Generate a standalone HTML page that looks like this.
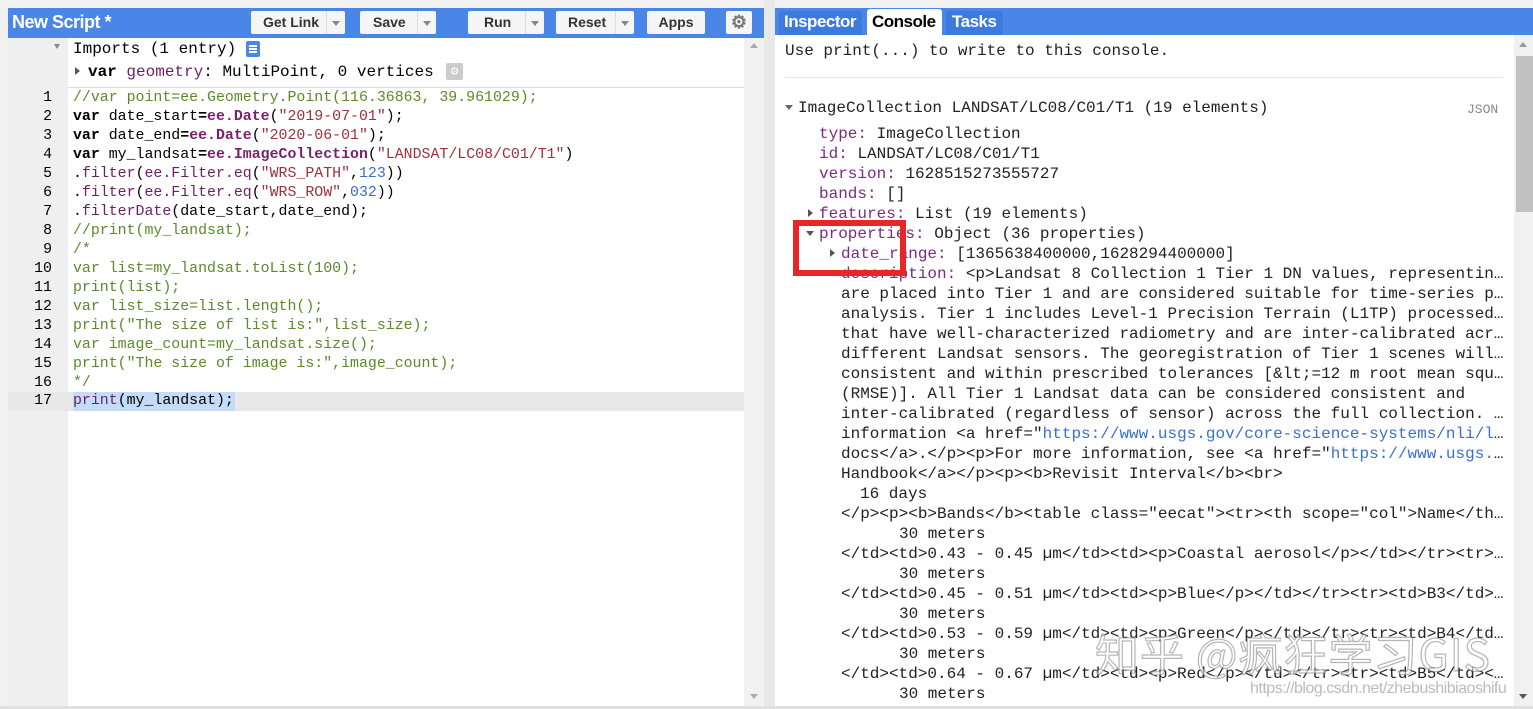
<!DOCTYPE html>
<html><head><meta charset="utf-8"><style>
*{margin:0;padding:0;box-sizing:border-box}
body{width:1533px;height:709px;background:#f1f1f1;position:relative;overflow:hidden;font-family:"Liberation Mono",monospace}
.a{position:absolute;white-space:pre}
.bar{position:absolute;background:#4a86e8}
.btn{position:absolute;top:11px;height:23px;background:#f5f5f5;border-radius:2px;font:bold 14px "Liberation Sans",sans-serif;color:#333;line-height:23px}
.btn .dd{position:absolute;right:0;top:0;width:19px;height:23px;border-left:1px solid #ddd;}
.btn .dd:after{content:"";position:absolute;left:5px;top:10px;border:4px solid transparent;border-top:5px solid #888}
.l{position:absolute;left:73px;font-size:14.9px;line-height:19px;white-space:pre;color:#000}
.n{position:absolute;left:8px;width:44px;text-align:right;font-size:14.9px;line-height:19px;color:#000}
.c{color:#5b8a2a}.k{color:#000;font-weight:bold}.s{color:#a0303a}.f{color:#7a1f6e;font-weight:bold}.m{color:#3b6fc4}.p{color:#6b1f6b}
.r{position:absolute;font-size:16px;line-height:20px;white-space:pre;overflow:hidden;text-overflow:ellipsis;color:#222}
.key{color:#7a2b82}.u{color:#3a6fd0}
.tri{position:absolute;width:0;height:0;border:4px solid transparent}
.L{position:absolute;left:0;top:1px;width:1533px;height:0}
</style></head><body>
<div class="a" style="left:8px;top:8px;width:756px;height:701px;background:#fff"></div>
<div class="bar" style="left:8px;top:8px;width:756px;height:30px"></div>
<div class="a" style="left:12px;top:12px;font:bold 18px 'Liberation Sans',sans-serif;color:#fff;letter-spacing:-0.5px">New Script *</div>
<div class="btn" style="left:251px;width:94px"><span style="padding-left:12px">Get Link</span><div class="dd"></div></div>
<div class="btn" style="left:360px;width:76px"><span style="padding-left:13px">Save</span><div class="dd"></div></div>
<div class="btn" style="left:468px;width:76px"><span style="padding-left:16px">Run</span><div class="dd"></div></div>
<div class="btn" style="left:556px;width:78px"><span style="padding-left:12px">Reset</span><div class="dd"></div></div>
<div class="btn" style="left:647px;width:58px;text-align:center">Apps</div>
<div class="btn" style="left:726px;width:26px;text-align:center;color:#777;font-size:18px">⚙</div>
<div class="a" style="left:8px;top:38px;width:60px;height:671px;background:#efefef"></div>
<div class="a" style="left:68px;top:38px;width:676px;height:50px;background:#fff;border-bottom:1px solid #ddd"></div>
<div class="tri" style="left:54px;top:44px;border-top:5px solid #888;border-width:5px 3px 0 3px"></div>
<div class="l" style="top:39px;font-size:16px;line-height:20px">Imports (1 entry)</div>
<div class="a" style="left:246px;top:41px;width:14px;height:16px;background:#4a86e8;border-radius:2px"><div style="margin:4px 3px;height:1.5px;background:#fff;box-shadow:0 3px #fff,0 6px #fff"></div></div>
<div class="tri" style="left:75px;top:67px;border-left:5px solid #555;border-width:4px 0 4px 5px"></div>
<div class="l" style="top:62px;left:88px;font-size:16px;line-height:20px"><span class="k">var</span> <span class="p">geometry</span>: MultiPoint, 0 vertices</div>
<div class="a" style="left:446px;top:63px;width:17px;height:17px;background:#ccc;border-radius:2px;color:#fff;font-size:13px;text-align:center;line-height:17px">⚙</div>
<div class="a" style="left:8px;top:392px;width:736px;height:19px;background:#e8e8e8"></div>
<div class="a" style="left:73px;top:392px;width:162px;height:19px;background:#c5dcf8"></div>
<div class="L">
<div class="n" style="top:88px">1</div><div class="l c" style="top:88px">//var point=ee.Geometry.Point(116.36863, 39.961029);</div>
<div class="n" style="top:107px">2</div><div class="l" style="top:107px"><span class="k">var</span> date_start<span class="k">=</span><span class="f">ee.Date</span>(<span class="s">"2019-07-01"</span>);</div>
<div class="n" style="top:126px">3</div><div class="l" style="top:126px"><span class="k">var</span> date_end<span class="k">=</span><span class="f">ee.Date</span>(<span class="s">"2020-06-01"</span>);</div>
<div class="n" style="top:145px">4</div><div class="l" style="top:145px"><span class="k">var</span> my_landsat<span class="k">=</span><span class="f">ee.ImageCollection</span>(<span class="s">"LANDSAT/LC08/C01/T1"</span>)</div>
<div class="n" style="top:164px">5</div><div class="l" style="top:164px">.<span class="p">filter</span>(<span class="p">ee.Filter.eq</span>(<span class="s">"WRS_PATH"</span>,<span class="m">123</span>))</div>
<div class="n" style="top:183px">6</div><div class="l" style="top:183px">.<span class="p">filter</span>(<span class="p">ee.Filter.eq</span>(<span class="s">"WRS_ROW"</span>,<span class="m">032</span>))</div>
<div class="n" style="top:202px">7</div><div class="l" style="top:202px">.<span class="p">filterDate</span>(date_start,date_end);</div>
<div class="n" style="top:221px">8</div><div class="l c" style="top:221px">//print(my_landsat);</div>
<div class="n" style="top:240px">9</div><div class="l c" style="top:240px">/*</div>
<div class="n" style="top:259px">10</div><div class="l c" style="top:259px">var list=my_landsat.toList(100);</div>
<div class="n" style="top:278px">11</div><div class="l c" style="top:278px">print(list);</div>
<div class="n" style="top:297px">12</div><div class="l c" style="top:297px">var list_size=list.length();</div>
<div class="n" style="top:316px">13</div><div class="l c" style="top:316px">print("The size of list is:",list_size);</div>
<div class="n" style="top:335px">14</div><div class="l c" style="top:335px">var image_count=my_landsat.size();</div>
<div class="n" style="top:354px">15</div><div class="l c" style="top:354px">print("The size of image is:",image_count);</div>
<div class="n" style="top:373px">16</div><div class="l c" style="top:373px">*/</div>
<div class="n" style="top:391px">17</div><div class="l" style="top:391px"><span class="p">print</span>(my_landsat);</div>
</div>
<div class="a" style="left:744px;top:38px;width:20px;height:671px;background:#f1f1f1"></div>
<div class="tri" style="left:750px;top:43px;border-bottom:5px solid #aaa;border-width:0 4px 5px 4px"></div>
<div class="tri" style="left:750px;top:694px;border-top:5px solid #aaa;border-width:5px 4px 0 4px"></div>
<div class="a" style="left:764px;top:0;width:11px;height:709px;background:#e9e9e9"></div>
<div class="a" style="left:775px;top:8px;width:758px;height:701px;background:#fff"></div>
<div class="bar" style="left:775px;top:8px;width:758px;height:27px"></div>
<div class="a" style="left:779px;top:11px;width:83px;height:24px;background:#3d7ae0;border-radius:3px 3px 0 0"></div>
<div class="a" style="left:784px;top:12px;font:bold 17px 'Liberation Sans',sans-serif;color:#fff;letter-spacing:-0.5px">Inspector</div>
<div class="a" style="left:867px;top:9px;width:75px;height:26px;background:#fff;border-radius:3px 3px 0 0"></div>
<div class="a" style="left:872px;top:12px;font:bold 17px 'Liberation Sans',sans-serif;color:#000;letter-spacing:-0.5px">Console</div>
<div class="a" style="left:946px;top:11px;width:57px;height:24px;background:#3d7ae0;border-radius:3px 3px 0 0"></div>
<div class="a" style="left:952px;top:12px;font:bold 17px 'Liberation Sans',sans-serif;color:#fff;letter-spacing:-0.5px">Tasks</div>
<div class="r" style="left:785px;top:41px">Use print(...) to write to this console.</div>
<div class="a" style="left:785px;top:77px;width:718px;height:1px;background:#e6e6e6"></div>
<div class="L">
<div class="tri" style="left:785px;top:104px;border-top:5px solid #666;border-width:5px 4px 0 4px"></div>
<div class="r" style="left:798px;top:97px">ImageCollection LANDSAT/LC08/C01/T1 (19 elements)</div>
<div class="a" style="left:1467px;top:101px;font-size:13px;color:#888">JSON</div>
<div class="r" style="left:819px;top:123px"><span class="key">type:</span> ImageCollection</div>
<div class="r" style="left:819px;top:143px"><span class="key">id:</span> LANDSAT/LC08/C01/T1</div>
<div class="r" style="left:819px;top:163px"><span class="key">version:</span> 1628515273555727</div>
<div class="r" style="left:819px;top:183px"><span class="key">bands:</span> []</div>
<div class="tri" style="left:808px;top:208px;border-left:5px solid #555;border-width:4px 0 4px 5px"></div>
<div class="r" style="left:819px;top:203px"><span class="key">features:</span> List (19 elements)</div>
<div class="tri" style="left:806px;top:230px;border-top:5px solid #555;border-width:5px 4px 0 4px"></div>
<div class="r" style="left:819px;top:223px"><span class="key">properties:</span> Object (36 properties)</div>
<div class="tri" style="left:830px;top:248px;border-left:5px solid #555;border-width:4px 0 4px 5px"></div>
<div class="r" style="left:841px;top:243px"><span class="key">date_range:</span> [1365638400000,1628294400000]</div>
<div class="r" style="left:841px;top:263px;width:664px"><span class="key">description:</span> &lt;p&gt;Landsat 8 Collection 1 Tier 1 DN values, representing scaled</div>
<div class="r" style="left:841px;top:283px;width:664px">are placed into Tier 1 and are considered suitable for time-series processing</div>
<div class="r" style="left:841px;top:303px;width:664px">analysis. Tier 1 includes Level-1 Precision Terrain (L1TP) processed data</div>
<div class="r" style="left:841px;top:323px;width:664px">that have well-characterized radiometry and are inter-calibrated across the</div>
<div class="r" style="left:841px;top:343px;width:664px">different Landsat sensors. The georegistration of Tier 1 scenes will be</div>
<div class="r" style="left:841px;top:363px;width:664px">consistent and within prescribed tolerances [&amp;lt;=12 m root mean square error</div>
<div class="r" style="left:841px;top:383px;width:664px">(RMSE)]. All Tier 1 Landsat data can be considered consistent and</div>
<div class="r" style="left:841px;top:403px;width:664px">inter-calibrated (regardless of sensor) across the full collection. See more</div>
<div class="r" style="left:841px;top:423px;width:664px">information &lt;a href="<span class="u">https://www.usgs.gov/core-science-systems/nli/landsat</span></div>
<div class="r" style="left:841px;top:443px;width:664px">docs&lt;/a&gt;.&lt;/p&gt;&lt;p&gt;For more information, see &lt;a href="<span class="u">https://www.usgs.gov/</span></div>
<div class="r" style="left:841px;top:463px;width:664px">Handbook&lt;/a&gt;&lt;/p&gt;&lt;p&gt;&lt;b&gt;Revisit Interval&lt;/b&gt;&lt;br&gt;</div>
<div class="r" style="left:860px;top:483px">16 days</div>
<div class="r" style="left:841px;top:503px;width:664px">&lt;/p&gt;&lt;p&gt;&lt;b&gt;Bands&lt;/b&gt;&lt;table class="eecat"&gt;&lt;tr&gt;&lt;th scope="col"&gt;Name&lt;/th&gt;&lt;th</div>
<div class="r" style="left:899px;top:523px">30 meters</div>
<div class="r" style="left:841px;top:543px;width:664px">&lt;/td&gt;&lt;td&gt;0.43 - 0.45 µm&lt;/td&gt;&lt;td&gt;&lt;p&gt;Coastal aerosol&lt;/p&gt;&lt;/td&gt;&lt;/tr&gt;&lt;tr&gt;&lt;td</div>
<div class="r" style="left:899px;top:563px">30 meters</div>
<div class="r" style="left:841px;top:583px;width:664px">&lt;/td&gt;&lt;td&gt;0.45 - 0.51 µm&lt;/td&gt;&lt;td&gt;&lt;p&gt;Blue&lt;/p&gt;&lt;/td&gt;&lt;/tr&gt;&lt;tr&gt;&lt;td&gt;B3&lt;/td&gt;&lt;td</div>
<div class="r" style="left:899px;top:603px">30 meters</div>
<div class="r" style="left:841px;top:623px;width:664px">&lt;/td&gt;&lt;td&gt;0.53 - 0.59 µm&lt;/td&gt;&lt;td&gt;&lt;p&gt;Green&lt;/p&gt;&lt;/td&gt;&lt;/tr&gt;&lt;tr&gt;&lt;td&gt;B4&lt;/td&gt;&lt;td</div>
<div class="r" style="left:899px;top:643px">30 meters</div>
<div class="r" style="left:841px;top:663px;width:664px">&lt;/td&gt;&lt;td&gt;0.64 - 0.67 µm&lt;/td&gt;&lt;td&gt;&lt;p&gt;Red&lt;/p&gt;&lt;/td&gt;&lt;/tr&gt;&lt;tr&gt;&lt;td&gt;B5&lt;/td&gt;&lt;td</div>
<div class="r" style="left:899px;top:683px">30 meters</div>
</div>
<div class="a" style="left:793px;top:220px;width:113px;height:56px;border:6px solid #e8262a"></div>
<div class="a" style="left:1095px;top:620px;font:44px 'Noto Sans CJK SC',sans-serif;color:rgba(255,255,255,0.6);-webkit-text-stroke:1.2px rgba(120,120,120,0.55);letter-spacing:1px">知乎 @疯狂学习GIS</div>
<div class="a" style="left:1250px;top:680px;font:16px 'Liberation Sans',sans-serif;color:rgba(180,180,180,0.9);letter-spacing:-0.5px">https://blog.csdn.net/zhebushibiaoshifu</div>
<div class="a" style="left:1514px;top:35px;width:19px;height:674px;background:#f1f1f1"></div>
<div class="a" style="left:1516px;top:56px;width:17px;height:156px;background:#c1c1c1"></div>
<div class="tri" style="left:1519px;top:42px;border-bottom:5px solid #999;border-width:0 4px 5px 4px"></div>
<div class="tri" style="left:1519px;top:694px;border-top:5px solid #555;border-width:5px 4px 0 4px"></div>
<div class="a" style="left:0;top:706px;width:1533px;height:3px;background:#e0e0e0"></div>
</body></html>
